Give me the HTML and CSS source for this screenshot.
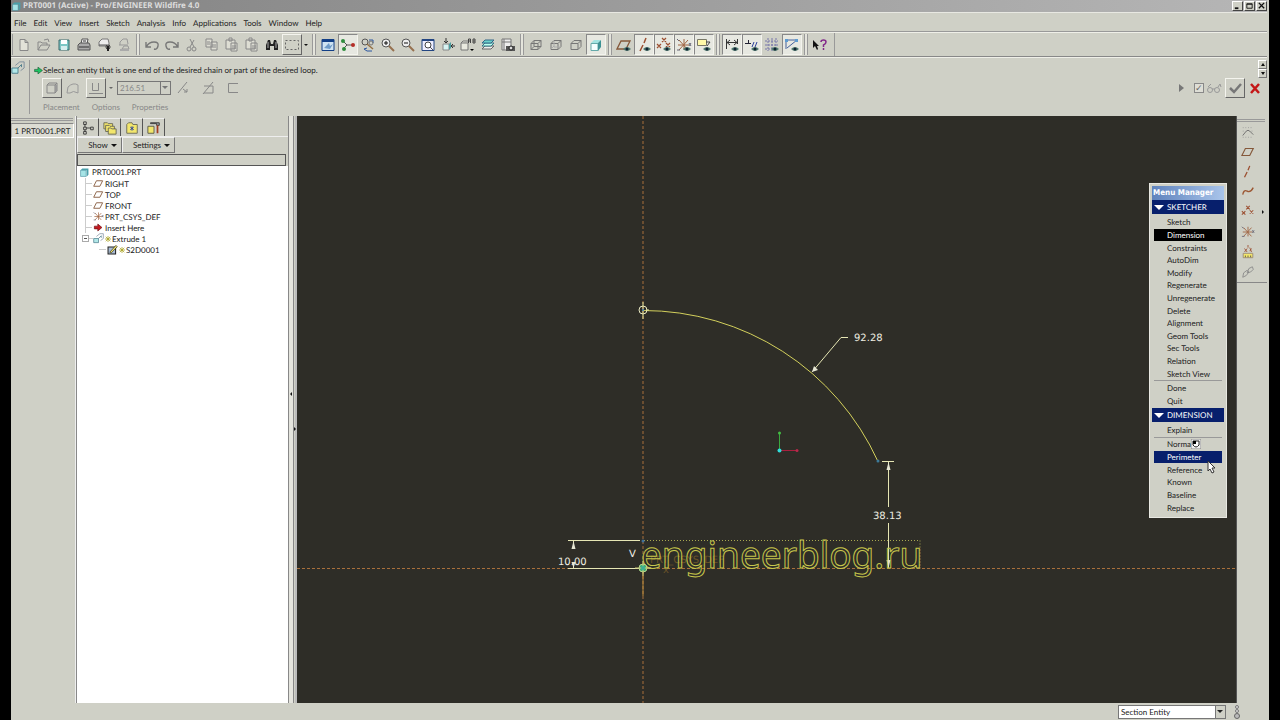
FILE: index.html
```html
<!DOCTYPE html>
<html lang="en">
  <head>
    <meta charset="utf-8">
    <title>PRT0001 (Active) - Pro/ENGINEER Wildfire 4.0</title>
    <meta name="viewport" content="width=device-width, initial-scale=1.0">
    <link rel="stylesheet" href="styles.css">
  </head>
  <body>
    <!-- icons -->
    <svg class="defs" aria-hidden="true">
      <symbol id="new" viewBox="0 0 16 16"><path d="M4 2.500h5l3 3v8h-8zM9 2.500v3h3" fill="#e2e2d8" stroke="#888"/></symbol>
      <symbol id="open" viewBox="0 0 16 16"><path d="M2 13V5h3l1 1h5v2M2 13l3-5h9l-3 5zM8 3l4-1 1 3" fill="none" stroke="#888"/></symbol>
      <symbol id="save" viewBox="0 0 16 16"><path d="M3 3h10v10H3z" fill="#7cc6c4" stroke="#3a6a6c"/><path d="M5 3h6v4H5z" fill="#fff"/><path d="M5 9h6v4H5z" fill="#d8eeee"/></symbol>
      <symbol id="print" viewBox="0 0 16 16"><path d="M5 7l1-5h6l-1 5" fill="#eee" stroke="#555"/><path d="M2 8l2-2h9l1 2v5H2z" fill="#aaa" stroke="#555"/><path d="M3 10h10M7 4h3" stroke="#333"/></symbol>
      <symbol id="printset" viewBox="0 0 16 16"><path d="M3 5l3-3h6l1 4v3H3z" fill="#eee" stroke="#777"/><path d="M3 8h8" stroke="#555"/><circle cx="12" cy="10" r="2" fill="#fff" stroke="#222"/><path d="M12 9v5" stroke="#222" stroke-width="2"/></symbol>
      <symbol id="mail" viewBox="0 0 16 16"><path d="M4 8V5l3-3h4l1 5M3 8h9M6 12h7l-1-3H8z" fill="none" stroke="#999"/><path d="M4 13h9" stroke="#aaa" stroke-width="2"/></symbol>
      <symbol id="undo" viewBox="0 0 16 16"><path d="M2 5v5h5M2.500 9.500Q5 5 10 5t4 4-4 3" fill="none" stroke="#777" stroke-width="1.400"/></symbol>
      <symbol id="redo" viewBox="0 0 16 16"><path d="M14 5v5H9M13.500 9.500Q11 5 6 5T2 9t4 3" fill="none" stroke="#777" stroke-width="1.400"/></symbol>
      <symbol id="cut" viewBox="0 0 16 16"><path d="M6 2l4 8M10 3L6 10" stroke="#888" fill="none"/><circle cx="5" cy="12" r="2" fill="none" stroke="#888"/><circle cx="10" cy="12" r="2" fill="none" stroke="#888"/></symbol>
      <symbol id="copy" viewBox="0 0 16 16"><path d="M2 2h6v8H2zM7 5h6v8H7z" fill="#ddddd3" stroke="#888"/><path d="M3 5h3M3 7h3M8 8h4M8 10h4" stroke="#888"/></symbol>
      <symbol id="paste" viewBox="0 0 16 16"><path d="M2 3h9v9H2zM5 1h3v3H5zM7 6h6v8H7z" fill="#ddddd3" stroke="#888"/><path d="M8 9h4M8 11h4" stroke="#888"/></symbol>
      <symbol id="find" viewBox="0 0 16 16"><path d="M2 13V8l2-5h2l1 4h2l1-4h2l2 5v5h-4V9H6v4z" fill="#222"/><path d="M4 5v6M12 5v6" stroke="#aaa"/></symbol>
      <symbol id="marquee" viewBox="0 0 16 16"><path d="M1.500 3.500h13v9h-13z" fill="none" stroke="#666" stroke-dasharray="2 2"/></symbol>
      <symbol id="redraw" viewBox="0 0 16 16"><path d="M2 2.500h12v11H2z" fill="#cfe3f2" stroke="#123f86"/><path d="M2 3.500h12" stroke="#123f86" stroke-width="3"/><path d="M4 11l5-5 1 3 3-2-3 5z" fill="#6f9bc8"/></symbol>
      <symbol id="spin" viewBox="0 0 16 16"><path d="M3 4l4 4-4 4M7 8h6" fill="none" stroke="#555"/><circle cx="3" cy="4" r="2" fill="#2f8d3d"/><circle cx="4" cy="12" r="2" fill="#2f8d3d"/><circle cx="13" cy="8" r="2" fill="#b52e27"/></symbol>
      <symbol id="orient" viewBox="0 0 16 16"><circle cx="5" cy="5" r="3" fill="none" stroke="#555"/><path d="M7 7l6 5" stroke="#957043" stroke-width="1.500"/><path d="M9 3h4v3M7 11l-3 1 3 2h5" fill="none" stroke="#2b56a1"/><circle cx="11" cy="6" r="2" fill="none" stroke="#777"/></symbol>
      <symbol id="zoomin" viewBox="0 0 16 16"><circle cx="6" cy="6" r="4" fill="#eee" stroke="#555"/><path d="M4 6h4M6 4v4" stroke="#111"/><path d="M9 9l5 5" stroke="#95704f" stroke-width="2"/></symbol>
      <symbol id="zoomout" viewBox="0 0 16 16"><circle cx="6" cy="6" r="4" fill="#eee" stroke="#555"/><path d="M4 6h4" stroke="#111"/><path d="M9 9l5 5" stroke="#95704f" stroke-width="2"/></symbol>
      <symbol id="refit" viewBox="0 0 16 16"><path d="M2 2.500h12v11H2z" fill="#eef" stroke="#234581"/><path d="M2 3h12" stroke="#234581" stroke-width="2"/><circle cx="8" cy="8" r="3" fill="#fff" stroke="#444"/><path d="M10 10l3 3" stroke="#555"/></symbol>
      <symbol id="reorient" viewBox="0 0 16 16"><path d="M3 7h6v6H3z" fill="#d7f4f3" stroke="#888"/><path d="M9 7l2-2v6l-2 2" fill="#4a9b9d"/><path d="M6 1v5M4 4l2 2 2-2M15 9h-4M13 7l-2 2 2 2" fill="none" stroke="#333"/></symbol>
      <symbol id="views" viewBox="0 0 16 16"><path d="M1 6h7v7H1zM1 6l2-2h5" fill="#e9e9df" stroke="#777"/><path d="M8.500 6V2h2v4M8.500 4h2M13 2h2v4h-2zM13 4h2" fill="none" stroke="#444"/><path d="M10 12h4l-2 2z"/></symbol>
      <symbol id="layers" viewBox="0 0 16 16"><path d="M2 12l3-3h9l-3 3z" fill="#eee" stroke="#666"/><path d="M2 9l3-3h9l-3 3z" fill="#bfe" stroke="#378"/><path d="M2 6l3-3h9l-3 3z" fill="#6cd3cb" stroke="#368"/></symbol>
      <symbol id="viewmgr" viewBox="0 0 16 16"><path d="M2 2h9v11H2zM4 2v11M2 5h9" fill="#eee" stroke="#777"/><path d="M6 9h9v5H6z" fill="#555"/><circle cx="11" cy="11" r="2" fill="#ddd" stroke="#222"/></symbol>
      <symbol id="wire" viewBox="0 0 16 16"><path d="M3 6.500h7v6H3zM6 3.500h7v6H6zM3 6.500l3-3M10 6.500l3-3M3 12.500l3-3M10 12.500l3-3" fill="none" stroke="#777"/></symbol>
      <symbol id="hidden" viewBox="0 0 16 16"><path d="M3 6.500h7v6H3zM3 6.500l3-3h7v6l-3 3M10 6.500l3-3" fill="none" stroke="#777"/><path d="M6 4v6h6M3 12l3-3" fill="none" stroke="#aaa"/></symbol>
      <symbol id="nohidden" viewBox="0 0 16 16"><path d="M3 6.500h7v6H3zM3 6.500l3-3h7v6l-3 3M10 6.500l3-3" fill="none" stroke="#777"/></symbol>
      <symbol id="shaded" viewBox="0 0 16 16"><path d="M3 6.500h7v7H3z" fill="#f4ffff" stroke="#6aa"/><path d="M3 6l3-3h7l-3 3z" fill="#a2e4e1"/><path d="M10 6l3-3v7l-3 4z" fill="#3d9294"/></symbol>
      <symbol id="eye" viewBox="0 0 16 16"><path d="M7 12q4-4 8 0-4 4-8 0z" fill="#517b70"/><circle cx="11" cy="12" r="1.500" fill="#123"/></symbol>
      <symbol id="plane" viewBox="0 0 16 16"><path d="M5 4h9l-4 8H1z" fill="none" stroke="#85583a" stroke-width="1.300"/></symbol>
      <symbol id="axis" viewBox="0 0 16 16"><path d="M10 1L8 6M7 8L4 14" stroke="#9c4f31" stroke-width="1.500"/></symbol>
      <symbol id="points" viewBox="0 0 16 16"><path d="M6 1l4 4M10 1L6 5M1 7l4 4M5 7l-4 4M10 6l4 4M14 6l-4 4" stroke="#9c4f31" stroke-width="1.200"/></symbol>
      <symbol id="csys" viewBox="0 0 16 16"><path d="M3 3l9 10M12 3L3 13M2 8h11M8 2v11" stroke="#a06542"/><path d="M1 2l2 2M13 6l2 3M15 6l-2 3M1 13h3" stroke="#667"/></symbol>
      <symbol id="note" viewBox="0 0 16 16"><path d="M1.500 2.500h9v6h-9z" fill="#fff9a9" stroke="#776"/><path d="M10 5h4l-3 4" fill="none" stroke="#444"/></symbol>
      <symbol id="dim" viewBox="0 0 16 16"><path d="M2.500 2v10M13.500 2v5M3 5.500h10M6 3L3 5.500 6 8M10 3l3 2.500L10 8" fill="none" stroke="#333"/></symbol>
      <symbol id="constr" viewBox="0 0 16 16"><path d="M1 6.500h6M4.500 3v3" stroke="#223"/><path d="M10 5l-2 5M13 5l-2 5" stroke="#2b3e9a"/></symbol>
      <symbol id="grid" viewBox="0 0 16 16"><path d="M1 4h13M1 8h13M1 12h8M4 1v13M8 1v13M12 1v9" stroke="#77a" stroke-dasharray="2 1"/></symbol>
      <symbol id="verts" viewBox="0 0 16 16"><path d="M2 12V3h11L3 11" fill="none" stroke="#45619c"/><path d="M1 2h3v3H1zM11 2h3v3h-3z" fill="#5e9bd0"/></symbol>
      <symbol id="help" viewBox="0 0 16 16"><path d="M1 3v8l2-2 2 4 1-1-1-3h2z" fill="#111"/><path d="M9 5q0-2 2.500-2t2.500 2q0 2-2.500 3v2M11.500 11v2" fill="none" stroke="#82298a" stroke-width="1.500"/></symbol>
      <symbol id="cube" viewBox="0 0 16 16"><path d="M1 4h10v11H1z" fill="#a6e4e6" stroke="#489"/><path d="M1 4l3-3h11l-3 3zM12 4l3-3v11l-3 3z" fill="#4aa0aa"/></symbol>
      <symbol id="extrude" viewBox="0 0 16 16"><path d="M5 5l5-4h5v7l-4 3" fill="none" stroke="#789"/><path d="M1 8h7v6H1z" fill="#b2e8e8" stroke="#478"/><path d="M8 8l4-4M12 4v3" fill="none" stroke="#478"/></symbol>
      <symbol id="garrow" viewBox="0 0 16 16"><path d="M1 6h6V2l8 6-8 6v-4H1z" fill="#1dc463" stroke="#164f2b"/></symbol>
      <symbol id="rarrow" viewBox="0 0 16 16"><path d="M2 6h5V3l6 5-6 5v-3H2z" fill="#c51a20" stroke="#701015"/></symbol>
      <symbol id="solid" viewBox="0 0 16 16"><path d="M3 5h8v8H3zM3 5l2-2h8v8l-2 2M11 5l2-2" fill="none" stroke="#888"/><path d="M12 5v7" stroke="#999" stroke-width="2"/></symbol>
      <symbol id="surf" viewBox="0 0 16 16"><path d="M3 13l1-6q5-5 10-2v8q-5-3-8 0z" fill="none" stroke="#999"/></symbol>
      <symbol id="depth" viewBox="0 0 16 16"><path d="M1 13.500h14M4.500 3v7.500h6V3" fill="none" stroke="#888"/></symbol>
      <symbol id="flip" viewBox="0 0 16 16"><path d="M3 13L12 2M8 9l4 3M12 9v3H9" fill="none" stroke="#888"/></symbol>
      <symbol id="trim" viewBox="0 0 16 16"><path d="M3 14L13 2M4 6h9v7H4" fill="none" stroke="#888"/></symbol>
      <symbol id="thick" viewBox="0 0 16 16"><path d="M13 3.500H3.500v9H13" fill="none" stroke="#888"/></symbol>
      <symbol id="glasses" viewBox="0 0 16 16"><circle cx="4" cy="10" r="2.500" fill="none" stroke="#999"/><circle cx="11" cy="10" r="2.500" fill="none" stroke="#999"/><path d="M2 7l3-3M12 7l2-3 1 3M6 9h3" fill="none" stroke="#999"/></symbol>
      <symbol id="tick" viewBox="0 0 16 16"><path d="M3 8l4 4 7-8" fill="none" stroke="#777" stroke-width="2.500"/></symbol>
      <symbol id="cross" viewBox="0 0 16 16"><path d="M4 4l8 9M12 4l-8 9" stroke="#c41717" stroke-width="2.500"/></symbol>
      <symbol id="treetab" viewBox="0 0 16 16"><path d="M3 1h3v3H3zM3 7h3v3H3zM3 12h3v3H3zM11 7h3v3h-3zM6 8h5M4.500 4v3M4.500 10v2" fill="none" stroke="#333"/></symbol>
      <symbol id="folders" viewBox="0 0 16 16"><path d="M1 2h4l1 1h5v6H1z" fill="#f2e66c" stroke="#665"/><path d="M3 5h4l1 1h5v6H3z" fill="#f2e66c" stroke="#665"/><path d="M6 8h3l1 1h5v6H6z" fill="#f2e66c" stroke="#665"/></symbol>
      <symbol id="favs" viewBox="0 0 16 16"><path d="M2 4l2-2h4l1 2h5v10H2z" fill="#f2e66c" stroke="#665"/><path d="M8 6v5M6 7l4 3M10 7l-4 3" stroke="#223a9a"/></symbol>
      <symbol id="conn" viewBox="0 0 16 16"><path d="M1 6h7v8H1z" fill="#f2e66c" stroke="#554"/><path d="M4 2h10v3h-3V3H4z" fill="#9a9fa4" stroke="#333"/><path d="M12 5v9" stroke="#a33c20" stroke-width="2"/></symbol>
      <symbol id="section" viewBox="0 0 16 16"><path d="M1.500 4.500h11v10h-11z" fill="#a9bcd6" stroke="#222" stroke-width="1.500"/><path d="M4 12l9-10 2 2-9 9z" fill="#f3e36c" stroke="#332"/></symbol>
      <symbol id="star" viewBox="0 0 8 8"><path d="M4 0v8M0 4h8M1 1l6 6M7 1L1 7" stroke="#a8a21c"/></symbol>
      <symbol id="sketch" viewBox="0 0 16 16"><path d="M2 12l4-5q2-2 4 0l4 4" fill="none" stroke="#666"/><path d="M2 3h12M2 7h2M12 7h2M2 14h12" stroke="#999" stroke-dasharray="1 2"/></symbol>
      <symbol id="curve" viewBox="0 0 16 16"><path d="M2 11q1-6 5-4t7-4" fill="none" stroke="#9c5733" stroke-width="1.500"/></symbol>
      <symbol id="ruler" viewBox="0 0 16 16"><path d="M2.500 9.500h11v5h-11z" fill="#f2e66c" stroke="#987"/><path d="M5 12v2M8 12v2M11 12v2" stroke="#554"/><path d="M8 0v3M4 4l3 4M7 4L4 8M10 3l2 5M12 4l-2 3" stroke="#9c4f31"/></symbol>
      <symbol id="chain" viewBox="0 0 16 16"><path d="M2 14l1-5 4-3 2 2-3 4zM7 9l2-5 4-2 1 3-3 3z" fill="none" stroke="#888"/></symbol>
      <symbol id="light" viewBox="0 0 8 14"><circle cx="4" cy="2" r="1.500" fill="#ddd" stroke="#777"/><circle cx="4" cy="6" r="1.500" fill="#ddd" stroke="#777"/><circle cx="4" cy="11" r="2.500" fill="#bbb" stroke="#666"/></symbol>
    </svg>

    <div class="app">
      <header class="titlebar">
        <svg class="tiny"><use href="#cube"/></svg>
        <h1>PRT0001 (Active) - Pro/ENGINEER Wildfire 4.0</h1>
        <div class="controls">
          <button aria-label="Minimize"><svg viewBox="0 0 10 9"><path d="M2 7h4" stroke="#111" stroke-width="2"/></svg></button>
          <button aria-label="Maximize"><svg viewBox="0 0 10 9"><path d="M2 2h6v5H2zM2 2.500h6" fill="none" stroke="#111"/></svg></button>
          <button aria-label="Close"><svg viewBox="0 0 10 9"><path d="M2 1l6 6M8 1L2 7" stroke="#111" stroke-width="1.500"/></svg></button>
        </div>
      </header>

      <nav class="menubar">
        <button>File</button><button>Edit</button><button>View</button><button>Insert</button><button>Sketch</button><button>Analysis</button><button>Info</button><button>Applications</button><button>Tools</button><button>Window</button><button>Help</button>
      </nav>

      <div class="toolbar">
        <div class="group first">
          <button aria-label="New"><svg><use href="#new"/></svg></button>
          <button aria-label="Open"><svg><use href="#open"/></svg></button>
          <button aria-label="Save"><svg><use href="#save"/></svg></button>
          <button aria-label="Print"><svg><use href="#print"/></svg></button>
          <button aria-label="Print setup"><svg><use href="#printset"/></svg></button>
          <button aria-label="Mail"><svg><use href="#mail"/></svg></button>
        </div>
        <div class="group">
          <button aria-label="Undo"><svg><use href="#undo"/></svg></button>
          <button aria-label="Redo"><svg><use href="#redo"/></svg></button>
          <button aria-label="Cut"><svg><use href="#cut"/></svg></button>
          <button aria-label="Copy"><svg><use href="#copy"/></svg></button>
          <button aria-label="Paste"><svg><use href="#paste"/></svg></button>
          <button aria-label="Paste special"><svg><use href="#paste"/></svg></button>
          <button aria-label="Find"><svg><use href="#find"/></svg></button>
          <button class="raised" aria-label="Select"><svg><use href="#marquee"/></svg></button>
          <button class="drop" aria-label="Select options"><i class="down"></i></button>
        </div>
        <div class="group">
          <button aria-label="Redraw"><svg><use href="#redraw"/></svg></button>
          <button class="on" aria-label="Spin center"><svg><use href="#spin"/></svg></button>
          <button aria-label="Orient mode"><svg><use href="#orient"/></svg></button>
          <button aria-label="Zoom in"><svg><use href="#zoomin"/></svg></button>
          <button aria-label="Zoom out"><svg><use href="#zoomout"/></svg></button>
          <button aria-label="Refit"><svg><use href="#refit"/></svg></button>
          <button aria-label="Reorient"><svg><use href="#reorient"/></svg></button>
          <button aria-label="Saved views"><svg><use href="#views"/></svg></button>
          <button aria-label="Layers"><svg><use href="#layers"/></svg></button>
          <button aria-label="View manager"><svg><use href="#viewmgr"/></svg></button>
        </div>
        <div class="group">
          <button aria-label="Wireframe"><svg><use href="#wire"/></svg></button>
          <button aria-label="Hidden line"><svg><use href="#hidden"/></svg></button>
          <button aria-label="No hidden"><svg><use href="#nohidden"/></svg></button>
          <button class="on" aria-label="Shading"><svg><use href="#shaded"/></svg></button>
        </div>
        <div class="group">
          <button aria-label="Datum planes"><svg><use href="#plane"/><use href="#eye"/></svg></button>
          <button class="on" aria-label="Datum axes"><svg><use href="#axis"/><use href="#eye"/></svg></button>
          <button class="on" aria-label="Datum points"><svg><use href="#points"/><use href="#eye"/></svg></button>
          <button class="on" aria-label="Coordinate systems"><svg><use href="#csys"/><use href="#eye"/></svg></button>
          <button class="on" aria-label="Annotations"><svg><use href="#note"/><use href="#eye"/></svg></button>
        </div>
        <div class="group">
          <button class="on" aria-label="Show dimensions"><svg><use href="#dim"/><use href="#eye"/></svg></button>
          <button class="on" aria-label="Show constraints"><svg><use href="#constr"/><use href="#eye"/></svg></button>
          <button aria-label="Show grid"><svg><use href="#grid"/><use href="#eye"/></svg></button>
          <button class="on" aria-label="Show vertices"><svg><use href="#verts"/><use href="#eye"/></svg></button>
        </div>
        <div class="group last">
          <button aria-label="Context help"><svg><use href="#help"/></svg></button>
        </div>
      </div>

      <section class="dashboard">
        <div class="feature"><svg><use href="#extrude"/></svg></div>
        <div class="dash">
          <p class="message"><svg class="tiny"><use href="#garrow"/></svg>Select an entity that is one end of the desired chain or part of the desired loop.</p>
          <div class="options">
            <button class="raised" aria-label="Solid" disabled><svg><use href="#solid"/></svg></button>
            <button aria-label="Surface" disabled><svg><use href="#surf"/></svg></button>
            <button class="raised gap" aria-label="Depth" disabled><svg><use href="#depth"/></svg></button>
            <i class="down grey"></i>
            <span class="combo depth"><select aria-label="Depth value" disabled><option>216.51</option></select></span>
            <button aria-label="Flip" disabled><svg><use href="#flip"/></svg></button>
            <button class="spaced" aria-label="Remove material" disabled><svg><use href="#trim"/></svg></button>
            <button class="spaced" aria-label="Thicken" disabled><svg><use href="#thick"/></svg></button>
          </div>
          <div class="panels">
            <button disabled>Placement</button><button disabled>Options</button><button disabled>Properties</button>
          </div>
        </div>
        <div class="finish">
          <div class="scroller">
            <button aria-label="Previous message"><i class="up"></i></button>
            <button aria-label="Next message"><i class="down"></i></button>
          </div>
          <div class="accept">
            <i class="play"></i>
            <input type="checkbox" aria-label="Preview" checked disabled>
            <svg><use href="#glasses"/></svg>
            <button class="raised" aria-label="Done" disabled><svg><use href="#tick"/></svg></button>
            <button class="cancel" aria-label="Cancel"><svg><use href="#cross"/></svg></button>
          </div>
        </div>
      </section>

      <main class="work">
        <aside class="tasks"><button>1 PRT0001.PRT</button></aside>

        <aside class="navigator">
          <div class="tabs">
            <button class="current" aria-label="Model tree"><svg><use href="#treetab"/></svg></button>
            <button aria-label="Folders"><svg><use href="#folders"/></svg></button>
            <button aria-label="Favorites"><svg><use href="#favs"/></svg></button>
            <button aria-label="Connections"><svg><use href="#conn"/></svg></button>
          </div>
          <div class="treemenu">
            <button>Show <i class="down"></i></button><button>Settings <i class="down"></i></button>
          </div>
          <div class="treehead"></div>
          <ul class="tree">
            <li class="root"><svg><use href="#cube"/></svg>PRT0001.PRT</li>
            <li><svg><use href="#plane"/></svg>RIGHT</li>
            <li><svg><use href="#plane"/></svg>TOP</li>
            <li><svg><use href="#plane"/></svg>FRONT</li>
            <li><svg><use href="#csys"/></svg>PRT_CSYS_DEF</li>
            <li><svg><use href="#rarrow"/></svg>Insert Here</li>
            <li class="opened"><svg><use href="#extrude"/></svg><svg class="star"><use href="#star"/></svg>Extrude 1</li>
            <li class="child"><svg><use href="#section"/></svg><svg class="star"><use href="#star"/></svg>S2D0001</li>
          </ul>
        </aside>

        <div class="splitter"><i class="left"></i><i class="right"></i></div>

        <div class="canvas">
          <svg class="drawing">
            <!-- datum references -->
            <path class="ref" d="M346 0V1200"/>
            <line class="ref" x1="0" y1="452.500" x2="100%" y2="452.500"/>
            <text class="ghost" x="353" y="447">PRT_CSYS_DEF</text>
            <text class="ghost" x="366" y="457">x</text>
            <path d="M346 452v28" stroke="#b98a3d"/>

            <!-- arc with its radius -->
            <path class="geom" d="M346 194.500A258 258 0 0 1 581 345.500"/>
            <path class="dimline" d="M515 256L544 221.500H551"/>
            <path class="head" d="M515 256l2-6 4 4z"/>
            <text class="value" x="557" y="225">92.28</text>
            <circle cx="346" cy="194" r="4" fill="none" stroke="#e8e8c0"/>
            <path d="M346 186v17M349 194h3" stroke="#e8e8a0"/>
            <circle cx="346" cy="194" r="1" fill="#3d7bb5"/>
            <circle cx="581" cy="345" r="1.500" fill="#3d7b9a"/>

            <!-- height -->
            <path class="dimline" d="M585 345.500h12M591.500 346v45M591.500 407v45"/>
            <path class="head" d="M591.500 346l2 8h-4zM591.500 452l2-8h-4z"/>
            <text class="value" x="576" y="403">38.13</text>

            <!-- section text -->
            <path class="dots" d="M347 424.500h276v28"/>
            <text class="outline" x="344" y="452">engineerblog.ru</text>
            <path class="dimline" d="M271 424.500h72M271 452.500h74M276.500 425v8M276.500 448v4"/>
            <path class="head" d="M276.500 425l2 8h-4zM276.500 452l2-6h-4z"/>
            <text class="value" x="261" y="449">10.00</text>
            <text class="value" x="332" y="441">V</text>
            <circle cx="346" cy="425" r="1.500" fill="#3d6f9a"/>
            <circle cx="346" cy="452" r="4" fill="#3cae76" stroke="#b9d98b"/>
            <path d="M338 452h16M346 445v15" stroke="#c9c77a"/>
            <circle cx="346" cy="452" r="2" fill="#3cae96"/>

            <!-- spin center -->
            <path d="M482.500 334V317" stroke="#3aa83d"/><circle cx="482.500" cy="317" r="1.500" fill="#43bd43"/>
            <path d="M483 334.500h17" stroke="#a8203f"/><circle cx="500" cy="334.500" r="1.500" fill="#b8284b"/>
            <circle cx="482.500" cy="334.500" r="2" fill="#2fdedb"/>
          </svg>

          <div class="manager">
            <h2>Menu Manager</h2>
            <h3><i class="down white"></i>SKETCHER</h3>
            <div class="items sketcher">
              <button>Sketch</button><button class="chosen">Dimension</button><button>Constraints</button><button>AutoDim</button><button>Modify</button><button>Regenerate</button><button>Unregenerate</button><button>Delete</button><button>Alignment</button><button>Geom Tools</button><button>Sec Tools</button><button>Relation</button><button>Sketch View</button>
            </div>
            <div class="items leave">
              <button>Done</button><button>Quit</button>
            </div>
            <h3><i class="down white"></i>DIMENSION</h3>
            <div class="items explain"><button>Explain</button></div>
            <div class="items dims">
              <button>Normal<svg class="mouse" viewBox="0 0 10 10"><path d="M0 0h10v10H0z" fill="#eee" stroke="#888"/><path d="M2 2h6v4q-3 4-6 0z" fill="#fff" stroke="#222"/><path d="M2 2h3v3H2z"/></svg></button><button class="hot">Perimeter</button><button>Reference</button><button>Known</button><button>Baseline</button><button>Replace</button>
            </div>
            <svg class="pointer" viewBox="0 0 9 14"><path d="M1 1v10l2-2 2 4 2-1-2-4h3z" fill="#fff" stroke="#333"/></svg>
          </div>
        </div>

        <div class="datums">
          <button aria-label="Sketch tool"><svg><use href="#sketch"/></svg></button>
          <button aria-label="Plane tool"><svg><use href="#plane"/></svg></button>
          <button aria-label="Axis tool"><svg><use href="#axis"/></svg></button>
          <button aria-label="Curve tool"><svg><use href="#curve"/></svg></button>
          <button aria-label="Point tool"><svg><use href="#points"/></svg><i class="more"></i></button>
          <button aria-label="Coordinate system tool"><svg><use href="#csys"/></svg></button>
          <button aria-label="Analysis tool"><svg><use href="#ruler"/></svg></button>
          <button aria-label="Reference tool"><svg><use href="#chain"/></svg></button>
        </div>
      </main>

      <footer class="status">
        <span class="combo filter"><select aria-label="Selection filter"><option>Section Entity</option></select></span>
        <svg class="lights"><use href="#light"/></svg>
      </footer>
    </div>
  </body>
</html>
```
FILE: styles.css
```css
*, *::before, *::after {
  box-sizing: border-box;
}
body {
  margin: 0;
  background: #000;
  color: #222;
  font-family: Lato, "Liberation Sans", sans-serif;
  font-size: 8px;
  line-height: 10px;
  text-rendering: geometricPrecision;
}
.defs {
  display: none;
}
.app {
  display: flex;
  flex-direction: column;
  min-height: 100vh;
  margin: 0 11px;
  padding-right: 2px;
  background: #cfd0c6;
}
button {
  display: flex;
  align-items: center;
  justify-content: center;
  margin: 0;
  padding: 0;
  border: 0;
  background: none;
  color: inherit;
  font: inherit;
  text-rendering: inherit;
  white-space: nowrap;
}
svg {
  display: block;
  width: 16px;
  height: 16px;
  flex: none;
}
svg.tiny {
  width: 9px;
  height: 9px;
}

/* small arrows */
.down, .up, .play, .left, .right, .more {
  display: block;
  flex: none;
  border: 3px solid transparent;
}
.down {
  border-top-color: #111;
  border-bottom: 0;
}
.down.grey {
  border-width: 2px 2px 0;
  border-top-color: #666;
}
.down.white {
  border-width: 5px 5px 0;
  border-top-color: #fff;
}
.up {
  border-bottom-color: #111;
  border-top: 0;
}
.play {
  border-width: 4px 0 4px 5px;
  border-left-color: #777;
}
.more {
  border-width: 2px 0 2px 2px;
  border-left-color: #111;
}

.raised {
  border: 1px solid;
  border-color: #f4f4ee #666 #666 #f4f4ee;
}
.on {
  border: 1px solid;
  border-color: #888 #f4f4ee #f4f4ee #888;
  background: #e7e8e1;
}

/* title and menus */
.titlebar {
  display: flex;
  align-items: center;
  height: 13px;
  padding-left: 1px;
  background: linear-gradient(90deg, #828282, #b6b6b6);
  border-bottom: 1px solid #e8e8e2;
}
.titlebar h1 {
  flex: 1;
  margin: 0 0 0 2px;
  color: #dcdcdc;
  font: bold 8px/12px "Noto Sans", sans-serif;
}
.controls {
  display: flex;
  gap: 1px;
}
.controls button {
  width: 11px;
  height: 10px;
  background: #cfd0c6;
  border: 1px solid;
  border-color: #fff #444 #444 #fff;
}
.controls svg {
  width: 9px;
  height: 8px;
}
.menubar {
  display: flex;
  gap: 7px;
  height: 19px;
  padding: 1px 0 0 3px;
  border-bottom: 1px solid #999;
}

/* toolbar */
.toolbar {
  display: flex;
  height: 25px;
  border-top: 1px solid #efefe8;
  border-bottom: 1px solid #888;
}
.group {
  display: flex;
  align-items: center;
}
.group::before {
  content: "";
  width: 4px;
  height: 21px;
  margin: 0 2px;
  border: solid #999;
  border-width: 0 1px;
  background: #e4e4dc;
}
.group.first::before {
  width: 1px;
  margin: 0 1px;
  border-left: 0;
}
.group button {
  width: 20px;
  height: 21px;
}
.group .drop {
  width: 8px;
}
.drop .down {
  border-width: 2px 2px 0;
}
.group.last {
  padding-right: 4px;
  border-right: 1px solid #999;
}

/* dashboard */
.dashboard {
  display: flex;
  height: 59px;
  padding: 2px 0;
  border-top: 1px solid #efefe8;
}
.feature {
  width: 19px;
  border-right: 1px solid #999;
}
.feature svg {
  width: 14px;
}
.dash {
  flex: 1;
  padding: 2px 0 0 4px;
}
.message {
  display: flex;
  align-items: center;
  height: 16px;
  margin: 0;
}
.options, .panels, .accept {
  display: flex;
  align-items: center;
}
.options {
  height: 20px;
  padding-left: 8px;
}
.options button {
  width: 20px;
  height: 20px;
}
.options .gap {
  margin: 0 3px 0 4px;
}
.options .spaced {
  margin-left: 5px;
}
.combo {
  position: relative;
  display: block;
}
.combo::after {
  content: "";
  position: absolute;
  top: 5px;
  right: 3px;
  border: 3px solid transparent;
  border-top-color: #222;
  border-bottom: 0;
}
select {
  display: block;
  width: 100%;
  height: 14px;
  padding: 0 2px;
  appearance: none;
  border: 1px solid #777;
  border-radius: 0;
  background: linear-gradient(90deg, transparent calc(100% - 10px), #777 calc(100% - 10px), #777 calc(100% - 9px), #cfd0c6 calc(100% - 9px)), #fff;
  color: #222;
  font: inherit;
}
select:disabled {
  background-color: #cfd0c6;
  color: #888;
  opacity: 1;
}
.depth {
  width: 54px;
  margin: 0 2px 0 4px;
}
.depth::after {
  border-top-color: #777;
}
.panels {
  gap: 12px;
  height: 18px;
  padding-left: 9px;
  color: #888;
}
.finish {
  display: flex;
  flex-direction: column;
  align-items: flex-end;
}
.scroller button {
  width: 9px;
  height: 9px;
  border: 1px solid;
  border-color: #fff #777 #777 #fff;
}
.scroller i {
  border-left-width: 2px;
  border-right-width: 2px;
}
.accept {
  padding-right: 2px;
}
.accept input {
  width: 10px;
  height: 10px;
  margin: 0 2px 0 10px;
  appearance: none;
  border: 1px solid #888;
  background: #deded6;
  color: #666;
  font: bold 9px/8px "DejaVu Sans", sans-serif;
}
.accept input::before {
  content: "✓";
}
.accept .raised {
  width: 20px;
  height: 20px;
  margin-left: 3px;
}
.cancel {
  width: 20px;
}

/* working area */
.work {
  display: flex;
  flex: 1;
}
.tasks {
  width: 65px;
  border-right: 1px solid #eee;
}
.tasks::before {
  content: "";
  display: block;
  height: 3px;
  margin: 2px 2px 2px 0;
  border: solid #999;
  border-width: 1px 0;
}
.tasks button {
  width: 63px;
  height: 15px;
  border: 1px solid;
  border-color: #888 #fff #fff #aaa;
  background: #dcdcd3;
}
.navigator {
  display: flex;
  flex-direction: column;
  width: 213px;
  border: solid #888;
  border-width: 0 1px;
}
.tabs {
  display: flex;
  height: 21px;
  padding-top: 2px;
  border-bottom: 1px solid #eee;
}
.tabs button {
  width: 22px;
  border-right: 1px solid #555;
  border-top: 1px solid #eee;
}
.tabs svg {
  width: 14px;
  height: 14px;
}
.treemenu {
  display: flex;
  height: 16px;
}
.treemenu button {
  width: 45px;
  padding-left: 6px;
  gap: 3px;
  border: 1px solid;
  border-color: #eee #777 #777 #eee;
}
.treemenu button + button {
  width: 53px;
}
.treehead {
  height: 12px;
  margin: 1px 2px 0 0;
  border: 1px solid #555;
}
.tree {
  flex: 1;
  margin: 0;
  padding: 0 0 0 3px;
  list-style: none;
  background: #fff;
}
.tree li {
  display: flex;
  align-items: center;
  height: 11px;
  padding-left: 13px;
  background: linear-gradient(#ccc, #ccc) 5px 0 / 1px 100% no-repeat, linear-gradient(#ccc, #ccc) 5px 5px / 7px 1px no-repeat;
}
.tree svg {
  width: 11px;
  height: 11px;
  margin-right: 1px;
}
.tree .star {
  width: 6px;
  height: 6px;
}
.tree .root {
  height: 12px;
  padding: 0;
  background: none;
}
.tree .root svg {
  width: 9px;
  height: 9px;
  margin-right: 3px;
}
.tree .opened {
  position: relative;
  background: linear-gradient(#ccc, #ccc) 9px 5px / 4px 1px no-repeat;
}
.opened::before {
  content: "";
  position: absolute;
  left: 2px;
  top: 2px;
  width: 7px;
  height: 7px;
  border: 1px solid #aaa;
  background: linear-gradient(#555, #555) 1px 2px / 3px 1px no-repeat;
}
.tree .child {
  padding-left: 27px;
  background: linear-gradient(#ccc, #ccc) 19px 5px / 7px 1px no-repeat;
}
.splitter {
  position: relative;
  width: 8px;
  border-right: 2px solid #bbb;
  background: linear-gradient(90deg, #e4e4dd 4px, #888 4px, #888 5px, #cfd0c6 5px);
}
.splitter .left, .splitter .right {
  position: absolute;
  top: 47%;
  left: 1px;
  border-width: 2px 2px 2px 0;
  border-right-color: #111;
}
.splitter .right {
  top: 53%;
  left: 5px;
  border-width: 2px 0 2px 2px;
  border-right-color: transparent;
  border-left-color: #111;
}
.canvas {
  position: relative;
  flex: 1;
  min-height: 420px;
  overflow: hidden;
  background: #2e2d27;
}
.drawing {
  position: absolute;
  width: 100%;
  height: 100%;
}
.ref {
  stroke: #a8703c;
  stroke-dasharray: 3 2;
}
.geom {
  fill: none;
  stroke: #d3d05c;
}
.dimline {
  fill: none;
  stroke: #e6e6b4;
}
.head {
  fill: #e6e6d4;
}
.dots {
  fill: none;
  stroke: #a8a850;
  stroke-dasharray: 1 2;
}
.value {
  fill: #eeeee2;
  font: 10px "DejaVu Sans", sans-serif;
}
.ghost {
  fill: #6b5428;
  font: 10px "DejaVu Sans", sans-serif;
}
.outline {
  fill: none;
  stroke: #c6c64c;
  font: 37px "Noto Sans", sans-serif;
}

/* floating menu */
.manager {
  position: absolute;
  top: 67px;
  right: 9px;
  width: 78px;
  padding: 2px;
  border: 1px solid #e8e8e2;
  background: #cfd0c6;
}
.manager h2 {
  height: 14px;
  margin: 0;
  padding-left: 1px;
  background: linear-gradient(90deg, #5f83bd, #a9c4ea);
  color: #fff;
  font: bold 8px/14px "DejaVu Sans Condensed", sans-serif;
}
.manager h3 {
  display: flex;
  align-items: center;
  height: 14px;
  margin: 0;
  padding-left: 2px;
  gap: 3px;
  background: #071f6c;
  color: #fff;
  font: inherit;
}
.items {
  display: grid;
  grid-auto-rows: 1fr;
  margin: 0 2px;
  border-bottom: 1px solid #999;
}
.items button {
  justify-content: flex-start;
  padding-left: 13px;
}
.sketcher {
  height: 167px;
  padding-top: 2px;
}
.leave {
  height: 27px;
  padding-bottom: 1px;
  border: 0;
}
.explain {
  height: 16px;
  padding-top: 1px;
}
.dims {
  height: 77px;
  padding-bottom: 1px;
  border: 0;
}
.items .chosen {
  background: #000;
  color: #fff;
}
.items .hot {
  background: #071f6c;
  color: #fff;
}
.mouse {
  width: 10px;
  height: 10px;
  margin-left: -2px;
}
.pointer {
  position: absolute;
  left: 57px;
  bottom: 42px;
  width: 9px;
  height: 16px;
}

/* datum tools */
.datums {
  display: flex;
  flex-direction: column;
  width: 31px;
  padding-top: 3px;
  border-left: 1px solid #555;
}
.datums::before {
  content: "";
  height: 3px;
  margin-right: 2px;
  border: solid #999;
  border-width: 1px 0;
}
.datums button {
  position: relative;
  width: 22px;
  height: 20px;
}
.datums svg {
  width: 14px;
  height: 14px;
}
.datums .more {
  position: absolute;
  right: -5px;
}
.datums::after {
  content: "";
  border-top: 1px solid #888;
}

.status {
  display: flex;
  align-items: center;
  justify-content: flex-end;
  height: 17px;
  padding: 1px 26px 0 0;
}
.filter {
  width: 108px;
  margin-right: 3px;
}
.lights {
  width: 8px;
  height: 14px;
  margin-left: 4px;
}
```
